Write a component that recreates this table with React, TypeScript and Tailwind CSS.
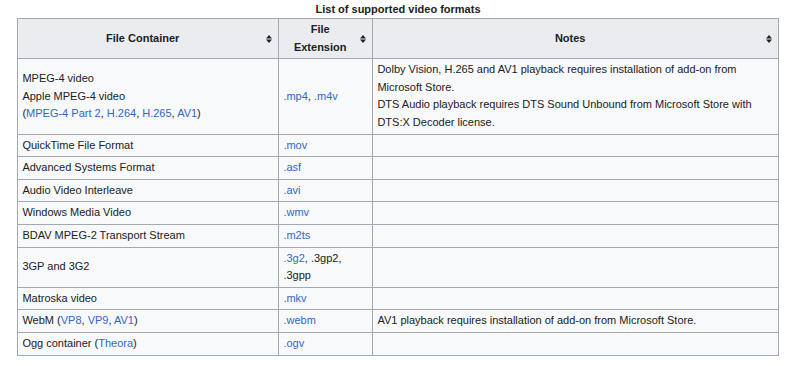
import React from 'react';

const A: React.FC<{ children: React.ReactNode }> = ({ children }) => (
  <a className="text-[#3366cc] no-underline">{children}</a>
);

const SortIcon: React.FC = () => (
  <svg width="6" height="9" viewBox="0 0 6 9" className="absolute right-[6px] top-1/2 -translate-y-1/2">
    <path d="M0 4 L3 0.5 L6 4 Z" fill="#202122" />
    <path d="M0 5 L3 8.5 L6 5 Z" fill="#202122" />
  </svg>
);

const ROWS: { container: React.ReactNode; ext: React.ReactNode; notes?: React.ReactNode }[] = [
  { container: 'QuickTime File Format', ext: <A>.mov</A> },
  { container: 'Advanced Systems Format', ext: <A>.asf</A> },
  { container: 'Audio Video Interleave', ext: <A>.avi</A> },
  { container: 'Windows Media Video', ext: <A>.wmv</A> },
  { container: 'BDAV MPEG-2 Transport Stream', ext: <A>.m2ts</A> },
  { container: '3GP and 3G2', ext: <><A>.3g2</A>, .3gp2, .3gpp</> },
  { container: 'Matroska video', ext: <A>.mkv</A> },
  {
    container: <>WebM (<A>VP8</A>, <A>VP9</A>, <A>AV1</A>)</>,
    ext: <A>.webm</A>,
    notes: 'AV1 playback requires installation of add-on from Microsoft Store.',
  },
  { container: <>Ogg container (<A>Theora</A>)</>, ext: <A>.ogv</A> },
];

const td = 'border border-[#a2a9b1] px-[4.4px] py-[2px] align-middle';
const th = 'relative border border-[#a2a9b1] bg-[#eaecf0] pl-[4.4px] pr-[15px] py-[2px] font-bold text-center align-middle';

const App: React.FC = () => {
  return (
    <div className="min-h-screen bg-white pl-[17px] pt-[1px] font-['Liberation_Sans',Arial,sans-serif] text-[11px] leading-[1.6] text-[#202122]">
      <table className="w-[761px] table-fixed border-collapse bg-[#f8f9fa]">
        <caption className="bg-white font-bold h-[17px]">List of supported video formats</caption>
        <colgroup>
          <col className="w-[261px]" />
          <col className="w-[94px]" />
          <col className="w-[406px]" />
        </colgroup>
        <thead>
          <tr>
            <th className={th}>File Container<SortIcon /></th>
            <th className={th}>File Extension<SortIcon /></th>
            <th className={th}>Notes<SortIcon /></th>
          </tr>
        </thead>
        <tbody>
          <tr>
            <td className={td}>
              MPEG-4 video
              <br />
              Apple MPEG-4 video
              <br />(<A>MPEG-4 Part 2</A>, <A>H.264</A>, <A>H.265</A>, <A>AV1</A>)
            </td>
            <td className={td}>
              <A>.mp4</A>, <A>.m4v</A>
            </td>
            <td className={td}>
              Dolby Vision, H.265 and AV1 playback requires installation of add-on from Microsoft Store.
              <br />
              DTS Audio playback requires DTS Sound Unbound from Microsoft Store with DTS:X Decoder license.
            </td>
          </tr>
          {ROWS.map((r, i) => (
            <tr key={i}>
              <td className={td}>{r.container}</td>
              <td className={td}>{r.ext}</td>
              <td className={td}>{r.notes}</td>
            </tr>
          ))}
        </tbody>
      </table>
    </div>
  );
};

export default App;
